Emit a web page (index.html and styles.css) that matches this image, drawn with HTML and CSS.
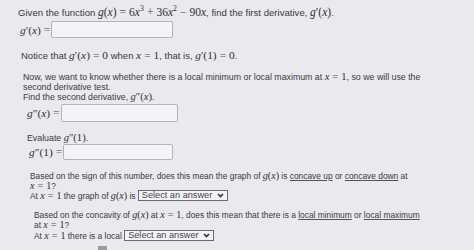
FILE: index.html
```html
<!DOCTYPE html>
<html lang="en">
<head>
    <meta charset="UTF-8">
    <title>Derivative question</title>
    <link rel="stylesheet" href="styles.css">
</head>
<body>
    <div class="page">
        <p class="line l1">Given the function <span class="m"><i>g</i>(<i>x</i>)<b class="op">=</b>6<i>x</i><sup>3</sup><b class="op">+</b>36<i>x</i><sup>2</sup><b class="op">−</b>90<i>x</i></span>, find the first derivative, <span class="m"><i>g</i>′(<i>x</i>)</span>.</p>
        <div class="ans a1"><span class="m"><i>g</i>′(<i>x</i>)</span><span class="eq">=</span><span class="box b1"></span></div>

        <p class="line l2">Notice that <span class="m"><i>g</i>′(<i>x</i>)<b class="op">=</b>0</span> when <span class="m"><i>x</i><b class="op">=</b>1</span>, that is, <span class="m"><i>g</i>′(1)<b class="op">=</b>0</span>.</p>

        <div class="block k1">
            <p class="line">Now, we want to know whether there is a local minimum or local maximum at <span class="m"><i>x</i><b class="op">=</b>1</span>, so we will use the</p>
            <p class="line">second derivative test.</p>
            <p class="line">Find the second derivative, <span class="m"><i>g</i>″(<i>x</i>)</span>.</p>
        </div>
        <div class="ans a2"><span class="m"><i>g</i>″(<i>x</i>)</span><span class="eq">=</span><span class="box b2"></span></div>

        <p class="line l3">Evaluate <span class="m"><i>g</i>″(1)</span>.</p>
        <div class="ans a3"><span class="m"><i>g</i>″(1)</span><span class="eq">=</span><span class="box b3"></span></div>

        <div class="block k2">
            <p class="line">Based on the sign of this number, does this mean the graph of <span class="m"><i>g</i>(<i>x</i>)</span> is <u>concave up</u> or <u>concave down</u> at</p>
            <p class="line"><span class="m"><i>x</i><b class="op">=</b>1</span>?</p>
            <p class="line sel-line">At <span class="m"><i>x</i><b class="op">=</b>1</span> the graph of <span class="m"><i>g</i>(<i>x</i>)</span> is <span class="select">Select an answer <svg class="chev" width="7" height="5" viewBox="0 0 7 5"><polyline points="1,1 3.5,3.6 6,1" fill="none" stroke="#333" stroke-width="1.6"/></svg></span></p>
        </div>

        <div class="block k3">
            <p class="line">Based on the concavity of <span class="m"><i>g</i>(<i>x</i>)</span> at <span class="m"><i>x</i><b class="op">=</b>1</span>, does this mean that there is a <u>local minimum</u> or <u>local maximum</u></p>
            <p class="line">at <span class="m"><i>x</i><b class="op">=</b>1</span>?</p>
            <p class="line sel-line">At <span class="m"><i>x</i><b class="op">=</b>1</span> there is a local <span class="select">Select an answer <svg class="chev" width="7" height="5" viewBox="0 0 7 5"><polyline points="1,1 3.5,3.6 6,1" fill="none" stroke="#333" stroke-width="1.6"/></svg></span></p>
        </div>

        <div class="stub"></div>
    </div>
</body>
</html>
```

FILE: styles.css
```css
body {
    margin: 0;
    background: #e9e9ee;
    font-family: "Liberation Sans", Arial, sans-serif;
    font-size: 9.5px;
    color: #3a3a3e;
}
.page {
    width: 474px;
    height: 250px;
    overflow: hidden;
    padding-top: 7px;
    box-sizing: border-box;
}
.line {
    margin: 0;
    line-height: 10px;
    height: 10px;
    white-space: nowrap;
}
.m {
    font-family: "Liberation Serif", "Times New Roman", serif;
    font-size: 1.2em;
    line-height: 10px;
    color: #2f2f33;
}
.m sup {
    font-size: 0.68em;
    line-height: 0;
}
.op {
    font-weight: normal;
    margin: 0 3px;
    color: #555;
}
u {
    text-decoration-color: #555;
}
.l1 {
    padding-left: 18px;
    font-size: 9.6px;
}
.ans {
    display: flex;
    align-items: center;
}
.eq {
    font-family: "Liberation Serif", serif;
    font-size: 11.5px;
    color: #777;
    margin: 0 1px 0 3px;
}
.box {
    display: inline-block;
    background: #f4f4f6;
    border: 1px solid #b4b4b8;
    border-radius: 2px;
}
.a1 {
    margin-top: 4px;
    padding-left: 20px;
}
.b1 {
    width: 120px;
    height: 15px;
}
.l2 {
    margin-top: 12px;
    padding-left: 21px;
}
.k1 {
    margin-top: 12px;
    padding-left: 23px;
    font-size: 8.8px;
}
.a2 {
    margin-top: 2px;
    padding-left: 27px;
}
.b2 {
    width: 115px;
    height: 16px;
}
.l3 {
    margin-top: 11px;
    padding-left: 27px;
    font-size: 8.8px;
}
.a3 {
    margin-top: 1px;
    padding-left: 29px;
}
.b3 {
    width: 108px;
    height: 14px;
}
.k2 {
    margin-top: 11px;
    padding-left: 30px;
    font-size: 8.4px;
}
.k3 {
    margin-top: 10px;
    padding-left: 34px;
    font-size: 8.4px;
}
.k2 .sel-line {
    margin-top: -1px;
}
.select {
    display: inline-block;
    font-size: 9.2px;
    line-height: 9px;
    padding: 0 3px 0 3px;
    border: 1px solid #6a6a74;
    background: #f3f3f6;
    color: #44444a;
    vertical-align: 1px;
}
.chev {
    margin-left: 2px;
    vertical-align: 0;
}
.stub {
    width: 9px;
    height: 6px;
    margin: 6px 0 0 98px;
    background: #9a9aa0;
}
```
